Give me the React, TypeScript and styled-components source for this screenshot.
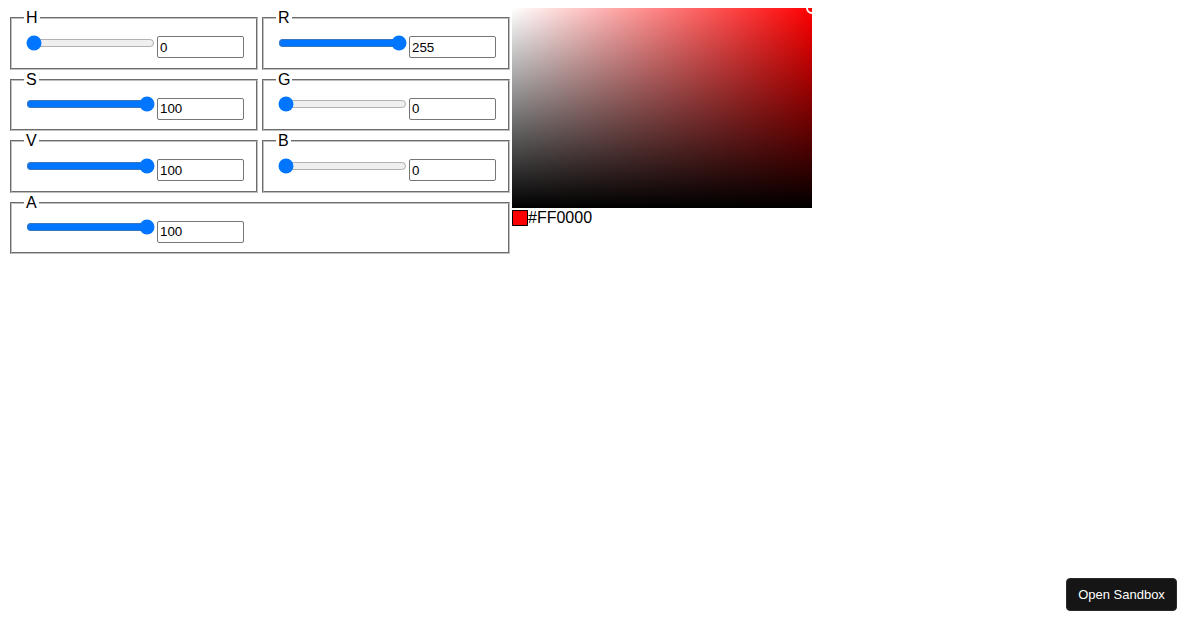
import React, { useState } from "react";
import styled, { createGlobalStyle } from "styled-components";

const Global = createGlobalStyle`
  body {
    margin: 8px;
    font-family: "Liberation Sans", Arial, sans-serif;
    background: #fff;
    color: #000;
  }
`;

const Layout = styled.div`
  display: flex;
  align-items: flex-start;
`;

const Controls = styled.div`
  display: grid;
  grid-template-columns: 252px 252px;
  width: 504px;
`;

const Field = styled.fieldset<{ $wide?: boolean }>`
  grid-column: ${(p) => (p.$wide ? "1 / span 2" : "auto")};
  margin: 0 2px;
  padding: 0.35em 0.75em 0.625em;
  border: 2px groove rgb(192, 192, 192);
  min-width: 0;
`;

const Legend = styled.legend`
  font-size: 16px;
  line-height: 20px;
  padding: 0 2px;
`;

const Row = styled.div`
  display: flex;
  align-items: flex-start;
  height: 24px;
`;

const Range = styled.input`
  width: 129px;
  margin: 1px 2px 0;
  accent-color: #0075ff;
`;

const NumInput = styled.input`
  box-sizing: border-box;
  width: 87px;
  height: 22px;
  margin: 0;
  margin-top: 2.6px;
  font-family: "Liberation Sans", Arial, sans-serif;
  font-size: 13.33px;
  padding: 1px 2px;
  border: 1px solid #767676;
  border-radius: 2px;
`;

const Picker = styled.div`
  display: flex;
  flex-direction: column;
`;

const Area = styled.div`
  position: relative;
  width: 300px;
  height: 200px;
  background: linear-gradient(to top, #000, rgba(0, 0, 0, 0)),
    linear-gradient(to right, #fff, #ff0000);
`;

const Pointer = styled.div`
  position: absolute;
  width: 8px;
  height: 8px;
  border: 2px solid #fff;
  border-radius: 50%;
  transform: translate(-50%, -50%);
`;

const HexRow = styled.div`
  display: flex;
  align-items: center;
  margin-top: 2px;
  font-size: 16px;
  line-height: 16px;
`;

const Swatch = styled.div<{ $color: string }>`
  box-sizing: border-box;
  width: 16px;
  height: 16px;
  border: 1px solid #000;
  background: ${(p) => p.$color};
`;

const SandboxButton = styled.button`
  position: fixed;
  right: 23px;
  bottom: 19px;
  width: 111px;
  height: 33px;
  background: #151515;
  color: #fff;
  border: 1px solid #2a2a2a;
  border-radius: 4px;
  font-family: "Liberation Sans", Arial, sans-serif;
  font-size: 13px;
  padding: 0;
`;

type Ch = { key: string; max: number; value: number; wide?: boolean };

export default function App() {
  const [vals, setVals] = useState<Record<string, number>>({
    H: 0, R: 255, S: 100, G: 0, V: 100, B: 0, A: 100,
  });
  const chans: Ch[] = [
    { key: "H", max: 360, value: vals.H },
    { key: "R", max: 255, value: vals.R },
    { key: "S", max: 100, value: vals.S },
    { key: "G", max: 255, value: vals.G },
    { key: "V", max: 100, value: vals.V },
    { key: "B", max: 255, value: vals.B },
    { key: "A", max: 100, value: vals.A, wide: true },
  ];
  const set = (k: string, v: string) =>
    setVals((s) => ({ ...s, [k]: Number(v) || 0 }));
  return (
    <>
      <Global />
      <Layout>
        <Controls>
          {chans.map((c) => (
            <Field key={c.key} $wide={c.wide}>
              <Legend>{c.key}</Legend>
              <Row>
                <Range
                  type="range"
                  min={0}
                  max={c.max}
                  value={c.value}
                  onChange={(e) => set(c.key, e.target.value)}
                /><NumInput
                  type="text"
                  value={String(c.value)}
                  onChange={(e) => set(c.key, e.target.value)}
                />
              </Row>
            </Field>
          ))}
        </Controls>
        <Picker>
          <Area>
            <Pointer style={{ left: "100%", top: "0%" }} />
          </Area>
          <HexRow>
            <Swatch $color="#FF0000" />
            #FF0000
          </HexRow>
        </Picker>
      </Layout>
      <SandboxButton>Open Sandbox</SandboxButton>
    </>
  );
}
